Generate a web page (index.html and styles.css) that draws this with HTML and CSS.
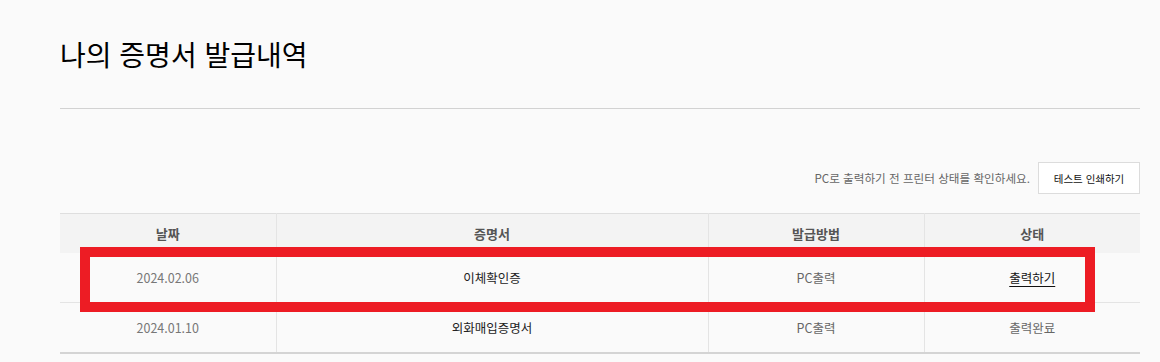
FILE: index.html
```html
<!DOCTYPE html>
<html lang="ko">
<head>
<meta charset="utf-8">
<title>나의 증명서 발급내역</title>
<link rel="stylesheet" href="styles.css">
</head>
<body>
<div class="page">
  <h1 class="title">나의 증명서 발급내역</h1>
  <div class="toolbar">
    <span class="note">PC로 출력하기 전 프린터 상태를 확인하세요.</span>
    <button class="test-btn" type="button">테스트 인쇄하기</button>
  </div>
  <div class="table-wrap">
    <table class="list">
      <colgroup>
        <col class="c-date"><col class="c-doc"><col class="c-method"><col class="c-state">
      </colgroup>
      <thead>
        <tr><th>날짜</th><th>증명서</th><th>발급방법</th><th>상태</th></tr>
      </thead>
      <tbody>
        <tr>
          <td class="date">2024.02.06</td>
          <td class="doc">이체확인증</td>
          <td class="method">PC출력</td>
          <td class="state"><a class="print-link" href="#">출력하기</a></td>
        </tr>
        <tr>
          <td class="date">2024.01.10</td>
          <td class="doc">외화매입증명서</td>
          <td class="method">PC출력</td>
          <td class="state">출력완료</td>
        </tr>
      </tbody>
    </table>
    <div class="highlight"></div>
  </div>
</div>
</body>
</html>
```

FILE: styles.css
```css
html, body {
  margin: 0;
  padding: 0;
  background: #fafafa;
}
body {
  font-family: "Noto Sans CJK KR", "Noto Sans", sans-serif;
  color: #111;
}
.page {
  padding: 0 20px 0 60px;
}
.title {
  margin: 0;
  padding: 34px 0 34px;
  font-size: 28px;
  line-height: 40px;
  font-weight: 400;
  color: #000;
  border-bottom: 1px solid #d2d2d2;
}
.toolbar {
  margin-top: 53px;
  display: flex;
  justify-content: flex-end;
  align-items: center;
  gap: 8px;
}
.note {
  font-size: 11.6px;
  color: #666;
}
.test-btn {
  width: 102px;
  height: 32px;
  background: #fff;
  border: 1px solid #dcdcdc;
  font-family: inherit;
  font-size: 10.5px;
  color: #111;
  padding: 0;
  cursor: pointer;
}
.table-wrap {
  position: relative;
  margin-top: 19px;
}
.list {
  width: 100%;
  border-collapse: collapse;
  table-layout: fixed;
  border-top: 1px solid #dedede;
  border-bottom: 2px solid #d4d4d4;
}
.c-date, .c-method, .c-state { width: 20%; }
.c-doc { width: 40%; }
.list th {
  height: 39px;
  background: #f3f3f3;
  font-size: 13px;
  font-weight: 700;
  color: #555;
  padding: 0;
  border-left: 1px solid #e4e4e4;
}
.list td {
  height: 49px;
  padding: 0;
  text-align: center;
  font-size: 12.5px;
  border-left: 1px solid #e4e4e4;
  border-top: 1px solid #e4e4e4;
}
.list tr > :first-child { border-left: none; }
.list tbody tr:first-child td { border-top: none; }
.date { color: #777; }
.doc { color: #222; }
.method { color: #666; }
.state { color: #666; }
.print-link {
  color: #111;
  text-decoration: underline;
  text-underline-offset: 3px;
}
.highlight {
  position: absolute;
  left: 20px;
  top: 34px;
  width: 1015px;
  height: 65px;
  box-sizing: border-box;
  border: 10px solid #ed1c24;
  pointer-events: none;
}
```
